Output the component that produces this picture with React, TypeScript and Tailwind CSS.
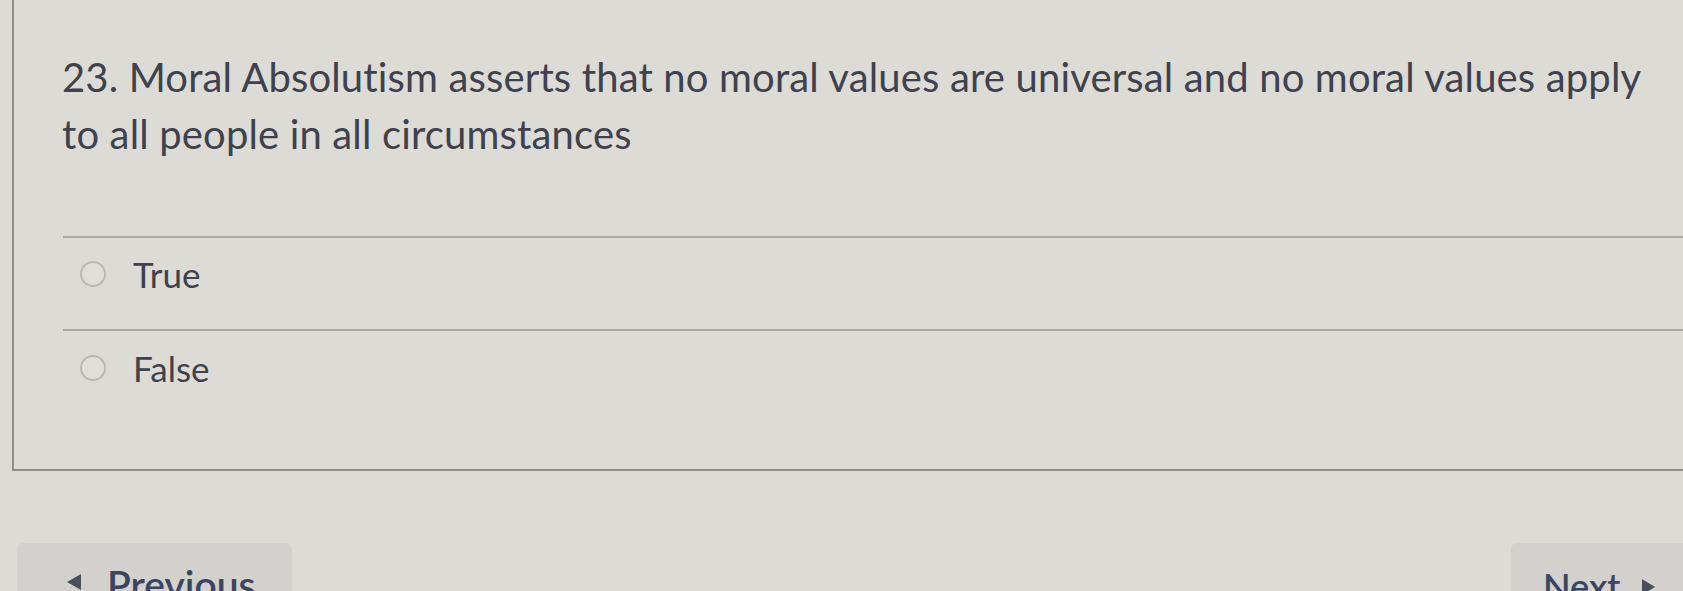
export default function App() {
  const options = ["True", "False"];

  return (
    <div className="w-full h-[591px] overflow-hidden bg-[#dcdbd6] text-[#3f424c] font-['Lato',_'Liberation_Sans',_sans-serif]">
      <div className="ml-[12px] h-[471px] border-l-2 border-b-2 border-[#8e8e8c]">
        <div className="pl-[48px] pt-[49px]">
          <p className="text-[40px] leading-[57px] tracking-[0.15px] whitespace-nowrap">
            23. Moral Absolutism asserts that no moral values are universal and no moral values apply
            <br />
            to all people in all circumstances
          </p>
        </div>

        <div className="mt-[73px] ml-[49px] border-t-2 border-[#a9a9a6]" />

        {options.map((opt, i) => (
          <div key={opt}>
            <label
              className={
                i === 0
                  ? "flex items-center gap-[27px] pl-[66px] pt-[15px] pb-[34px]"
                  : "flex items-center gap-[27px] pl-[66px] pt-[16px] pb-[40px]"
              }
            >
              <span className="w-[26px] h-[26px] rounded-full border-2 border-[#b9b9b6] bg-[#dfded9]" />
              <span className="text-[35px] leading-[42px]">{opt}</span>
            </label>
            {i === 0 && <div className="ml-[49px] border-t-2 border-[#a9a9a6]" />}
          </div>
        ))}
      </div>

      <div className="flex mt-[72px]">
        <button className="ml-[17px] w-[275px] h-[70px] rounded-t-md bg-[#d2d1cd] flex items-start pt-[18px] pl-[50px] gap-[26px] text-[#3a4560]">
          <svg width="14" height="16" viewBox="0 0 14 16" className="mt-[13px]">
            <path d="M14 0 L0 8 L14 16 Z" fill="#4a4f5c" />
          </svg>
          <span className="text-[39px] leading-[46px] font-semibold">Previous</span>
        </button>
        <button className="ml-auto mr-[-40px] w-[212px] h-[70px] rounded-t-md bg-[#d2d1cd] flex items-start pt-[22px] pl-[32px] gap-[22px] text-[#3a4560]">
          <span className="text-[36px] leading-[43px] font-semibold">Next</span>
          <svg width="13" height="16" viewBox="0 0 13 16" className="mt-[14px]">
            <path d="M0 0 L13 8 L0 16 Z" fill="#4a4f5c" />
          </svg>
        </button>
      </div>
    </div>
  );
}
